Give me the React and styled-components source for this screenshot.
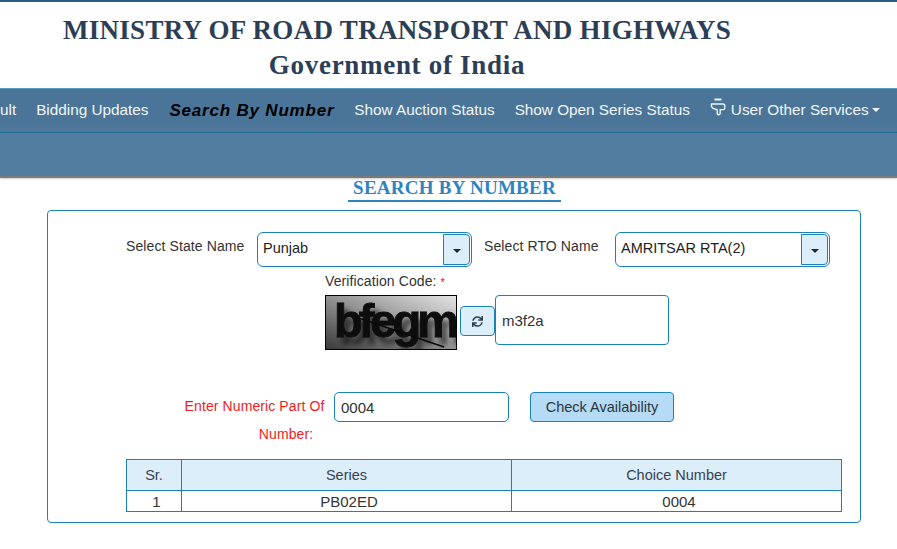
import styled, { createGlobalStyle } from "styled-components";
import { FaSync } from "react-icons/fa";

const navLinks = ["Show Auction Status", "Show Open Series Status"];

export default function App() {
  return (
    <>
      <GlobalStyle />
      <Page>
        <Banner>
          <Ministry>MINISTRY OF ROAD TRANSPORT AND HIGHWAYS</Ministry>
          <Government>Government of India</Government>
        </Banner>
        <NavBar>
          <NavClip>
            <ClippedItem>ult</ClippedItem>
            <NavItem>Bidding Updates</NavItem>
            <ActiveItem>Search By Number</ActiveItem>
            {navLinks.map((l) => (
              <NavItem key={l}>{l}</NavItem>
            ))}
            <NavItem>
              <HandIcon />
              User Other Services
              <Caret />
            </NavItem>
          </NavClip>
        </NavBar>
        <SubBar />
        <TitleRow>
          <PageTitle>SEARCH BY NUMBER</PageTitle>
        </TitleRow>
        <Card>
          <SelectRow>
            <SelectLabel>Select State Name</SelectLabel>
            <SelectBox>
              <span>Punjab</span>
              <SelectArrow>
                <ArrowDown />
              </SelectArrow>
            </SelectBox>
            <RtoLabel>Select RTO Name</RtoLabel>
            <SelectBox>
              <span>AMRITSAR RTA(2)</span>
              <SelectArrow>
                <ArrowDown />
              </SelectArrow>
            </SelectBox>
          </SelectRow>
          <CaptchaBlock>
            <VerifyLabel>
              Verification Code: <Required>*</Required>
            </VerifyLabel>
            <CaptchaRow>
              <Captcha />
              <RefreshButton>
                <FaSync />
              </RefreshButton>
              <CodeInput>m3f2a</CodeInput>
            </CaptchaRow>
          </CaptchaBlock>
          <NumberRow>
            <NumberLabel>
              <LabelLine>Enter Numeric Part Of</LabelLine>
              <LabelLine $indent={63}>Number:</LabelLine>
            </NumberLabel>
            <NumberInput>0004</NumberInput>
            <CheckButton>Check Availability</CheckButton>
          </NumberRow>
          <ResultTable>
            <colgroup>
              <col style={{ width: 55 }} />
              <col style={{ width: 330 }} />
              <col />
            </colgroup>
            <thead>
              <tr>
                <HeadCell>Sr.</HeadCell>
                <HeadCell>Series</HeadCell>
                <HeadCell>Choice Number</HeadCell>
              </tr>
            </thead>
            <tbody>
              <tr>
                <BodyCell>1</BodyCell>
                <BodyCell>PB02ED</BodyCell>
                <BodyCell>0004</BodyCell>
              </tr>
            </tbody>
          </ResultTable>
        </Card>
      </Page>
    </>
  );
}

function Captcha() {
  return (
    <CaptchaImage viewBox="0 0 130 53" preserveAspectRatio="none">
      <defs>
        <linearGradient id="captchaBg" x1="0" y1="1" x2="1" y2="0">
          <stop offset="0" stopColor="#3a3a3a" />
          <stop offset="0.45" stopColor="#8a8a8a" />
          <stop offset="1" stopColor="#e4e4e4" />
        </linearGradient>
        <filter id="captchaShadow" x="-10%" y="-10%" width="130%" height="140%">
          <feGaussianBlur in="SourceGraphic" stdDeviation="0.5" result="soft" />
          <feGaussianBlur in="SourceAlpha" stdDeviation="2.5" result="blur" />
          <feOffset in="blur" dx="5" dy="7" result="moved" />
          <feComponentTransfer in="moved" result="faded">
            <feFuncA type="linear" slope="0.55" />
          </feComponentTransfer>
          <feMerge>
            <feMergeNode in="faded" />
            <feMergeNode in="soft" />
          </feMerge>
        </filter>
      </defs>
      <rect width="130" height="53" fill="url(#captchaBg)" />
      <text
        x="8"
        y="41"
        fontFamily="Liberation Sans"
        fontWeight="700"
        fontSize="47"
        letterSpacing="-4"
        fill="#0a0a0a"
        stroke="#0a0a0a"
        strokeWidth="0.9"
        filter="url(#captchaShadow)"
      >
        bfegm
      </text>
      <line x1="30" y1="21" x2="118" y2="51" stroke="#0a0a0a" strokeWidth="1.8" />
    </CaptchaImage>
  );
}

function HandIcon() {
  return (
    <HandSvg viewBox="0 0 16 18" fill="none" stroke="currentColor" strokeWidth="1.4">
      <path d="M4.5 1.5h7" strokeWidth="2" />
      <path d="M1.5 6h11.5a1.8 1.8 0 0 1 1.8 1.8v2.2a1.6 1.6 0 0 1-1.6 1.6h-3v3.6a1.5 1.5 0 0 1-3 0v-3.4L3 10.4 1.5 8.6z" />
    </HandSvg>
  );
}

const GlobalStyle = createGlobalStyle`
  html, body {
    margin: 0;
    padding: 0;
    background: #fff;
    overflow: hidden;
  }
  body {
    font-family: "Liberation Sans", Arial, sans-serif;
  }
`;

const Page = styled.div`
  width: 897px;
  height: 549px;
  overflow: hidden;
  border-top: 2px solid #2b5f82;
  box-sizing: border-box;
`;

const Banner = styled.header`
  height: 86px;
  width: 794px;
  text-align: center;
  font-family: "Liberation Serif", "Times New Roman", serif;
  font-weight: 700;
  color: #2c3e56;
  padding-top: 12px;
  box-sizing: border-box;
`;

const Ministry = styled.div`
  font-size: 27px;
  line-height: 32px;
  letter-spacing: 0.3px;
`;

const Government = styled.div`
  font-size: 27px;
  line-height: 30px;
  margin-top: 4px;
  letter-spacing: 0.7px;
`;

const NavBar = styled.nav`
  height: 45px;
  box-sizing: border-box;
  background: linear-gradient(#4a7599, #4a7599 70%, #4f789b);
  border-top: 1px solid #5b9cc5;
  border-bottom: 1px solid #0e6595;
  overflow: hidden;
`;

const NavClip = styled.div`
  display: flex;
  align-items: center;
  height: 43px;
  white-space: nowrap;
`;

const NavItem = styled.a`
  display: flex;
  align-items: center;
  padding: 0 10px 2px;
  font-size: 15.3px;
  color: #f2f5f8;
`;

const ClippedItem = styled(NavItem)`
  padding-left: 0;
`;

const ActiveItem = styled.a`
  padding: 0 10px 0 11px;
  font-size: 17px;
  font-weight: 700;
  font-style: italic;
  letter-spacing: 0.8px;
  color: #000;
`;

const HandSvg = styled.svg`
  width: 16px;
  height: 18px;
  margin-right: 5px;
  margin-top: -5px;
`;

const Caret = styled.span`
  width: 0;
  height: 0;
  margin-left: 3px;
  border-top: 4px solid #f2f5f8;
  border-left: 4px solid transparent;
  border-right: 4px solid transparent;
`;

const SubBar = styled.div`
  box-sizing: border-box;
  height: 45px;
  background: #527ba0;
  border-bottom: 2px solid #7b7b7b;
  box-shadow: 0 1px 2px #ccc;
`;

const TitleRow = styled.div`
  display: flex;
  justify-content: center;
  padding-left: 12px;
  height: 32px;
`;

const PageTitle = styled.h2`
  margin: 0;
  height: 22px;
  padding: 0 5px;
  border-bottom: 2px solid #2d84c0;
  font-family: "Liberation Serif", "Times New Roman", serif;
  font-size: 19px;
  line-height: 20px;
  font-weight: 700;
  letter-spacing: 0.25px;
  color: #2d84c0;
`;

const Card = styled.section`
  box-sizing: border-box;
  width: 814px;
  height: 313px;
  margin-left: 47px;
  border: 1px solid #1a82b8;
  border-radius: 4px;
  padding: 21px 18px 0 78px;
  color: #333;
  font-size: 14px;
`;

const SelectRow = styled.div`
  display: flex;
  align-items: flex-start;
`;

const SelectLabel = styled.label`
  width: 131px;
  padding-top: 6px;
  line-height: 16px;
  letter-spacing: 0.1px;
`;

const RtoLabel = styled(SelectLabel)`
  margin-left: 12px;
`;

const SelectBox = styled.div`
  box-sizing: border-box;
  width: 215px;
  height: 35px;
  border: 1px solid #1a82b8;
  border-radius: 6px;
  display: flex;
  justify-content: space-between;
  padding: 1px 1px 0 5px;
  line-height: 28px;
  font-size: 14.5px;
  color: #222;
`;

const SelectArrow = styled.span`
  box-sizing: border-box;
  display: flex;
  align-items: center;
  justify-content: center;
  width: 27px;
  height: 31px;
  background: #ddeefb;
  border: 1px solid #1a82b8;
  border-radius: 0 4px 4px 0;
`;

const ArrowDown = styled.span`
  width: 0;
  height: 0;
  border-top: 4px solid #12293d;
  border-left: 4px solid transparent;
  border-right: 4px solid transparent;
  margin-top: 3px;
`;

const CaptchaBlock = styled.div`
  margin-left: 199px;
  margin-top: 5px;
`;

const VerifyLabel = styled.div`
  line-height: 18px;
  letter-spacing: 0.1px;
`;

const Required = styled.span`
  color: #f00;
  font-size: 11px;
`;

const CaptchaRow = styled.div`
  display: flex;
  align-items: flex-start;
  margin-top: 4px;
`;

const CaptchaImage = styled.svg`
  box-sizing: border-box;
  width: 132px;
  height: 55px;
  border: 1px solid #000;
`;

const RefreshButton = styled.button`
  box-sizing: border-box;
  width: 35px;
  height: 30px;
  margin: 11px 0 0 3px;
  padding: 0;
  display: flex;
  align-items: center;
  justify-content: center;
  background: #ddeefb;
  border: 1px solid #1a82b8;
  border-radius: 4px;
  color: #2c3e56;
  font-size: 11px;
`;

const CodeInput = styled.div`
  box-sizing: border-box;
  width: 174px;
  height: 50px;
  padding-left: 6px;
  display: flex;
  align-items: center;
  border: 1px solid #1a82b8;
  border-radius: 4px;
  font-size: 15px;
  color: #333;
`;

const NumberRow = styled.div`
  display: flex;
  align-items: flex-start;
  margin-top: 42px;
`;

const NumberLabel = styled.div`
  box-sizing: border-box;
  width: 208px;
  padding: 0 8px 0 57px;
  line-height: 28px;
  text-align: center;
  white-space: nowrap;
  color: #ee1c1c;
  letter-spacing: 0.1px;
`;

const LabelLine = styled.div`
  padding-left: ${(p) => p.$indent || 0}px;
`;

const NumberInput = styled.div`
  box-sizing: border-box;
  width: 175px;
  height: 30px;
  padding-left: 6px;
  display: flex;
  align-items: center;
  border: 1px solid #1a82b8;
  border-radius: 5px;
  font-size: 15px;
  color: #333;
`;

const CheckButton = styled.button`
  box-sizing: border-box;
  width: 144px;
  height: 30px;
  margin-left: 21px;
  padding: 0;
  background: #b5dbf6;
  border: 1px solid #1a82b8;
  border-radius: 4px;
  font-family: "Liberation Sans", Arial, sans-serif;
  font-size: 14.5px;
  color: #2c3540;
`;

const ResultTable = styled.table`
  width: 716px;
  margin-top: 11px;
  border-collapse: collapse;
  table-layout: fixed;
`;

const HeadCell = styled.th`
  height: 30px;
  padding: 0;
  border: 1px solid #1a82b8;
  background: #ddeefb;
  font-weight: 400;
  font-size: 14.5px;
  color: #3a4250;
`;

const BodyCell = styled.td`
  height: 20px;
  padding: 0 0 0 5px;
  border: 1px solid #1a82b8;
  text-align: center;
  font-size: 15px;
  color: #333;
`;
